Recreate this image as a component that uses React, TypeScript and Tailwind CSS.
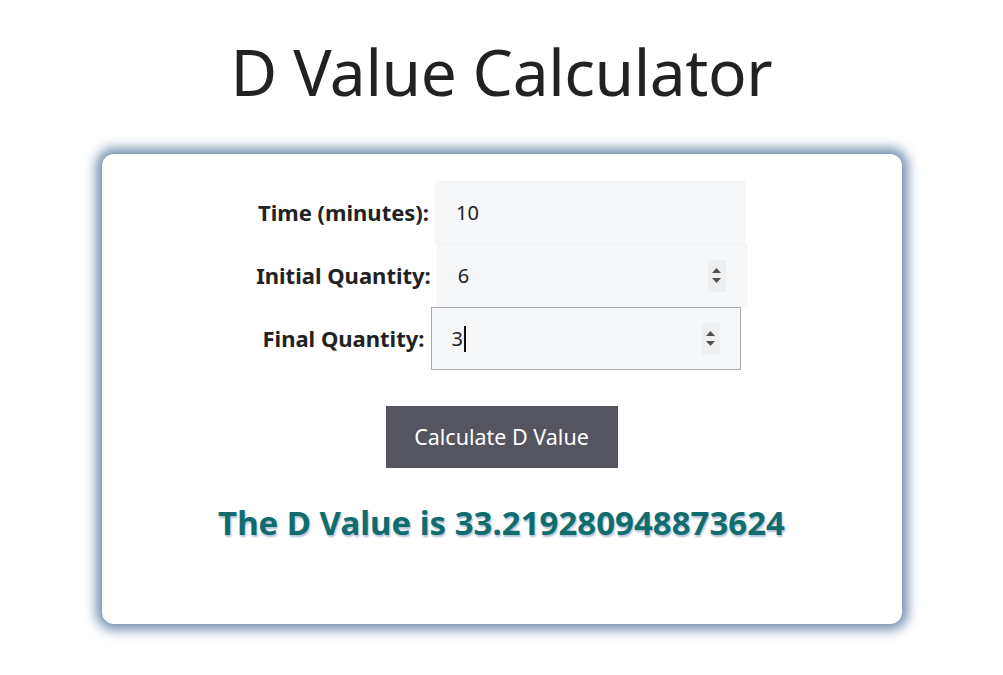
import React from "react";

function Spinner() {
  return (
    <div className="flex h-[32px] w-[18px] flex-col items-center justify-center gap-[5px] bg-[#eeeff1]">
      <svg width="9" height="5" viewBox="0 0 9 5"><path d="M0 5 L4.5 0 L9 5 Z" fill="#505050" /></svg>
      <svg width="9" height="5" viewBox="0 0 9 5"><path d="M0 0 L4.5 5 L9 0 Z" fill="#505050" /></svg>
    </div>
  );
}

function Row({ label, value, spinner, focused }: { label: string; value: string; spinner?: boolean; focused?: boolean }) {
  return (
    <div className="flex items-center justify-center gap-[6px]">
      <label className="text-[22px] font-bold text-[#222]">{label}</label>
      <div
        className={
          "flex h-[63px] w-[310px] items-center justify-between bg-[#f6f7f9] pl-[20px] pr-[20px] text-[20px] text-[#222] " +
          (focused ? "border border-[#a9a9b2]" : "border border-[#f3f4f6]")
        }
      >
        <span className="flex items-center">
          {value}
          {focused && <span className="ml-[1px] inline-block h-[26px] w-[2px] bg-[#111]" />}
        </span>
        {spinner && <Spinner />}
      </div>
    </div>
  );
}

export default function App() {
  return (
    <div className="min-h-[675px] bg-white pt-[28px] font-['Noto_Sans','Open_Sans',sans-serif]">
      <h1 className="text-center text-[64px] leading-[88px] font-normal text-[#222] tracking-[-0.4px]">D Value Calculator</h1>
      <div className="mx-auto mt-[38px] flex h-[470px] w-[800px] flex-col items-center rounded-[12px] bg-white pt-[27px] shadow-[0_0_12px_6px_rgba(95,125,165,0.85)]">
        <div className="flex w-full flex-col">
          <Row label="Time (minutes):" value="10" />
          <Row label="Initial Quantity:" value="6" spinner />
          <Row label="Final Quantity:" value="3" spinner focused />
        </div>
        <button className="mt-[36px] h-[62px] w-[232px] bg-[#55555f] text-[21.5px] text-white">Calculate D Value</button>
        <p className="mt-[31px] text-[33px] leading-[48px] font-bold text-[#116d6d] [text-shadow:1px_2px_2px_rgba(120,150,190,0.6)]">
          The D Value is 33.219280948873624
        </p>
      </div>
    </div>
  );
}
